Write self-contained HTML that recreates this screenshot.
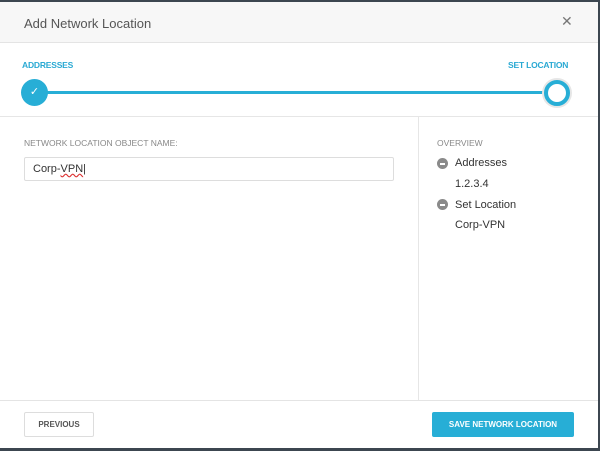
<!DOCTYPE html>
<html><head><style>
*{box-sizing:border-box;margin:0;padding:0}
body{width:600px;height:451px;background:#3c4650;font-family:"Liberation Sans",sans-serif;position:relative;overflow:hidden}
.m{position:absolute;left:0;top:2px;width:598px;height:446px;background:#fff}
.hd{position:absolute;left:0;top:0;width:598px;height:41px;background:#f7f7f7;border-bottom:1px solid #e4e4e4}
.t{position:absolute;left:24px;top:14px;font-size:13px;color:#555}
.x{position:absolute;left:561px;top:11px;font-size:14px;color:#777;font-weight:300}
.lbl{position:absolute;top:58px;font-size:8.5px;color:#29a9d3;font-weight:bold;letter-spacing:-0.2px}
.line{position:absolute;left:40px;top:89px;width:510px;height:3px;background:#27aed6}
.c1{position:absolute;left:21px;top:77px;width:27px;height:27px;border-radius:50%;background:#27aed6;color:#fff;font-size:11px;text-align:center;line-height:27px}
.c2{position:absolute;left:544px;top:78px;width:26px;height:26px;border-radius:50%;border:4px solid #27aed6;background:#fff;box-shadow:0 0 0 2px #e6e6e6}
.sep{position:absolute;left:0;top:114px;width:598px;height:1px;background:#e6e6e6}
.vs{position:absolute;left:418px;top:115px;width:1px;height:283px;background:#e6e6e6}
.fl{position:absolute;left:0;top:398px;width:598px;height:1px;background:#e4e4e4}
.sm{font-size:8.5px;color:#888;position:absolute}
.inp{position:absolute;left:24px;top:155px;width:370px;height:24px;border:1px solid #ddd;border-radius:2px;font-size:11px;color:#333;padding:5px 8px}
.ov{position:absolute;font-size:11px;color:#333}
.dot{position:absolute;width:11px;height:11px;border-radius:50%;background:#8a8a8a}
.dot:after{content:"";position:absolute;left:3px;top:5px;width:5px;height:1.5px;background:#fff}
.b1{position:absolute;left:24px;top:410px;width:70px;height:25px;border:1px solid #ddd;border-radius:2px;font-size:8px;font-weight:bold;color:#555;text-align:center;line-height:23px}
.b2{position:absolute;left:432px;top:410px;width:142px;height:25px;background:#27aed6;border-radius:2px;font-size:8px;font-weight:bold;color:#fff;text-align:center;line-height:25px}
</style></head><body>
<div class="m">
<div class="hd"><div class="t">Add Network Location</div><div class="x">✕</div></div>
<div class="lbl" style="left:22px">ADDRESSES</div>
<div class="lbl" style="left:508px">SET LOCATION</div>
<div class="line"></div>
<div class="c1">✓</div>
<div class="c2"></div>
<div class="sep"></div>
<div class="vs"></div>
<div class="sm" style="left:24px;top:136px">NETWORK LOCATION OBJECT NAME:</div>
<div class="inp">Corp-<span style="text-decoration:underline wavy #d33">VPN</span>|</div>
<div class="sm" style="left:437px;top:136px">OVERVIEW</div>
<div class="dot" style="left:437px;top:156px"></div>
<div class="ov" style="left:455px;top:155px">Addresses</div>
<div class="ov" style="left:455px;top:176px">1.2.3.4</div>
<div class="dot" style="left:437px;top:197px"></div>
<div class="ov" style="left:455px;top:197px">Set Location</div>
<div class="ov" style="left:455px;top:217px">Corp-VPN</div>
<div class="fl"></div>
<div class="b1">PREVIOUS</div>
<div class="b2">SAVE NETWORK LOCATION</div>
</div>
</body></html>
